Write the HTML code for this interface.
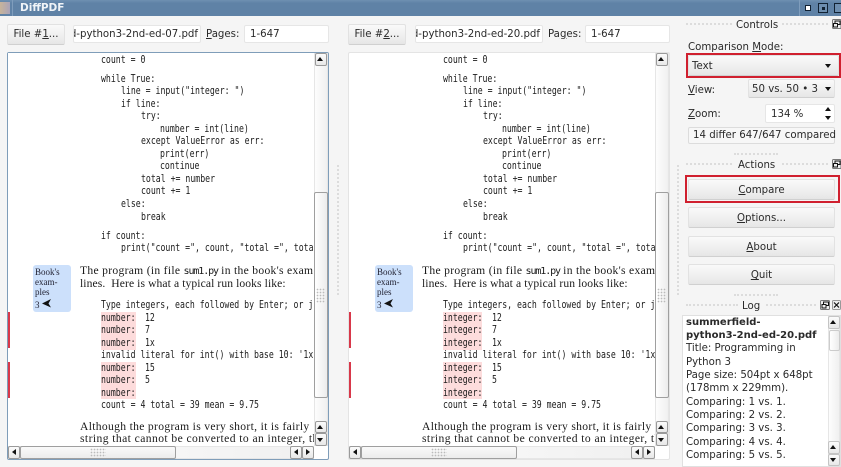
<!DOCTYPE html>
<html><head><meta charset="utf-8"><style>
html,body{margin:0;padding:0}
body{width:841px;height:467px;overflow:hidden;position:relative;background:#f5f5f5;font-family:"DejaVu Sans","Liberation Sans",sans-serif;font-size:10.2px;color:#2a2a2a}
div,span.a{position:absolute;box-sizing:border-box}
svg{position:absolute}
.t{white-space:pre;line-height:18px}
.lg{line-height:16px}
.b{background:linear-gradient(#fafafa,#e6e6e6);border:1px solid #e2e2e2;border-bottom-color:#d0d0d0;border-radius:2px;text-align:center;line-height:21px;white-space:pre}
.e{background:#fff;border:1px solid #e6e6e6;border-radius:2px;white-space:pre;line-height:17px;overflow:hidden}
.fn{right:2px;top:0}
.pane{left:8px;top:53px;width:306px;height:393px;overflow:hidden;background:#fff}
.m{font:10.2px/12px "DejaVu Sans Mono",monospace;color:#1c1c1c;white-space:pre;transform:scaleX(.805);transform-origin:0 0;margin-top:1px}
.s{font:11.6px/13px "Liberation Serif",serif;color:#1a1a1a;white-space:pre;letter-spacing:.42px}
.p{background:#fddcdc}
.bk{left:25px;top:212px;width:38px;height:47px;background:#cce0fb;border-radius:3px}
.bk div{font:9px/10px "Liberation Serif",serif;color:#223;left:2px;white-space:pre}
.sb{background:linear-gradient(90deg,#fdfdfd,#f0f0f0);border:1px solid #e6e6e6}
.btn{background:linear-gradient(#fbfbfb,#e8e8e8);border:1px solid #9a9a9a;border-radius:2px}
.h{background:linear-gradient(90deg,#fff,#ececec);border:1px solid #9f9f9f;border-radius:2px}
.u,.d,.l,.r{width:0;height:0;border-style:solid;border-color:transparent}
.u{border-width:0 3.5px 4px;border-bottom-color:#111}
.d{border-width:4px 3.5px 0;border-top-color:#111}
.l{border-width:3.5px 4px 3.5px 0;border-right-color:#111}
.r{border-width:3.5px 0 3.5px 4px;border-left-color:#111}
.dot{border-top:2px dotted #dcdcdc;height:0}
.vd{border-left:2px dotted #dcdcdc;width:0}
.grip{background-image:radial-gradient(#bbb 35%,transparent 40%);background-size:3px 3px}
u{text-decoration:underline}
</style></head><body>

<!-- title bar -->
<div style="left:0;top:0;width:841px;height:16px;background:linear-gradient(#6f90b1,#5f82a6 20%,#5f82a6)"></div>
<div style="left:0;top:2px;width:10px;height:12px;background:linear-gradient(90deg,#c8b49a,#a9a3b8)"></div>
<div style="left:12px;top:0;width:1px;height:16px;background:#7f9dbc"></div>
<div class="t" style="left:20px;top:-1px;color:#f0f4f8;font-weight:bold;font-size:10.5px">DiffPDF</div>
<div style="left:799px;top:0;width:1px;height:16px;background:#7f9dbc"></div>
<div style="left:805px;top:5px;width:6px;height:6px;background:#fff;border:1px solid #123"></div>
<div style="left:818px;top:3px;width:10px;height:10px;background:#6d8eaf;border:1px solid #123"></div>
<div style="left:822px;top:7px;width:3px;height:3px;background:#123"></div>
<div style="left:834px;top:3px;width:10px;height:10px;background:#6d8eaf;border:1px solid #123"></div>

<!-- left toolbar -->
<div class="b" style="left:7px;top:24px;width:58px;height:21px;line-height:19px">File #<u>1</u>...</div>
<div class="e" style="left:73px;top:25px;width:128px;height:18px"><div class="fn">rd-python3-2nd-ed-07.pdf</div></div>
<div class="t" style="left:206px;top:26px"><u>P</u>ages:</div>
<div class="e" style="left:244px;top:25px;width:85px;height:18px;padding-left:5px">1-647</div>

<!-- right toolbar -->
<div class="b" style="left:348px;top:24px;width:58px;height:21px;line-height:19px">File #<u>2</u>...</div>
<div class="e" style="left:415px;top:25px;width:128px;height:18px"><div class="fn">rd-python3-2nd-ed-20.pdf</div></div>
<div class="t" style="left:548px;top:26px">Pa<u>g</u>es:</div>
<div class="e" style="left:585px;top:25px;width:85px;height:18px;padding-left:5px">1-647</div>

<!-- frames -->
<div style="left:7px;top:52px;width:322px;height:408px;border:1px solid #7f9db9;border-radius:2px;background:#fff"></div>
<div style="left:348px;top:52px;width:322px;height:408px;border:1px solid #e4e4e4;border-radius:2px;background:#fff"></div>

<!-- left pane -->
<div class="pane">
<div class="m" style="left:93px;top:1px">count = 0</div>
<div class="m" style="left:93px;top:20px">while True:</div>
<div class="m" style="left:113px;top:32px">line = input("integer: ")</div>
<div class="m" style="left:113px;top:45px">if line:</div>
<div class="m" style="left:133px;top:57px">try:</div>
<div class="m" style="left:152px;top:70px">number = int(line)</div>
<div class="m" style="left:133px;top:82px">except ValueError as err:</div>
<div class="m" style="left:152px;top:95px">print(err)</div>
<div class="m" style="left:152px;top:107px">continue</div>
<div class="m" style="left:133px;top:120px">total += number</div>
<div class="m" style="left:133px;top:132px">count += 1</div>
<div class="m" style="left:113px;top:145px">else:</div>
<div class="m" style="left:133px;top:158px">break</div>
<div class="m" style="left:93px;top:177px">if count:</div>
<div class="m" style="left:113px;top:189px">print("count =", count, "total =", total</div>
<div class="bk"><div style="top:2px">Book's</div><div style="top:12px">exam-</div><div style="top:22px">ples</div><div style="top:35px">3</div><svg style="left:9px;top:34px" width="10" height="9"><path d="M0 4.5L9 0L6.5 4.5L9 8.5Z" fill="#111"/></svg></div>
<div class="s" style="left:72px;top:211px;letter-spacing:.3px">The program (in file <span style="font:10px 'DejaVu Sans Mono',monospace;letter-spacing:-1.1px">sum1.py</span> in the book's exam</div>
<div class="s" style="left:72px;top:224px;letter-spacing:.09px">lines.  Here is what a typical run looks like:</div>
<div class="p" style="left:93px;top:259px;width:35px;height:87px"></div>
<div class="m" style="left:93px;top:246px">Type integers, each followed by Enter; or just</div>
<div class="m" style="left:93px;top:259px">number: </div><div class="m" style="left:137px;top:259px">12</div>
<div class="m" style="left:93px;top:271px">number: </div><div class="m" style="left:137px;top:271px">7</div>
<div class="m" style="left:93px;top:284px">number: </div><div class="m" style="left:137px;top:284px">1x</div>
<div class="m" style="left:93px;top:296px;background:#fff;padding-right:200px">invalid literal for int() with base 10: '1x'</div>
<div class="m" style="left:93px;top:309px">number: </div><div class="m" style="left:137px;top:309px">15</div>
<div class="m" style="left:93px;top:321px">number: </div><div class="m" style="left:137px;top:321px">5</div>
<div class="m" style="left:93px;top:334px">number: </div>
<div class="m" style="left:93px;top:346px">count = 4 total = 39 mean = 9.75</div>
<div class="s" style="left:72px;top:367px;letter-spacing:.32px">Although the program is very short, it is fairly</div>
<div class="s" style="left:72px;top:379px">string that cannot be converted to an integer, the</div>
</div>
<div style="left:8px;top:312px;width:2px;height:36px;background:#d8384a"></div>
<div style="left:8px;top:362px;width:2px;height:36px;background:#d8384a"></div>

<!-- right pane -->
<div class="pane" style="left:350px">
<div class="m" style="left:93px;top:1px">count = 0</div>
<div class="m" style="left:93px;top:20px">while True:</div>
<div class="m" style="left:113px;top:32px">line = input("integer: ")</div>
<div class="m" style="left:113px;top:45px">if line:</div>
<div class="m" style="left:133px;top:57px">try:</div>
<div class="m" style="left:152px;top:70px">number = int(line)</div>
<div class="m" style="left:133px;top:82px">except ValueError as err:</div>
<div class="m" style="left:152px;top:95px">print(err)</div>
<div class="m" style="left:152px;top:107px">continue</div>
<div class="m" style="left:133px;top:120px">total += number</div>
<div class="m" style="left:133px;top:132px">count += 1</div>
<div class="m" style="left:113px;top:145px">else:</div>
<div class="m" style="left:133px;top:158px">break</div>
<div class="m" style="left:93px;top:177px">if count:</div>
<div class="m" style="left:113px;top:189px">print("count =", count, "total =", total</div>
<div class="bk"><div style="top:2px">Book's</div><div style="top:12px">exam-</div><div style="top:22px">ples</div><div style="top:35px">3</div><svg style="left:9px;top:34px" width="10" height="9"><path d="M0 4.5L9 0L6.5 4.5L9 8.5Z" fill="#111"/></svg></div>
<div class="s" style="left:72px;top:211px;letter-spacing:.3px">The program (in file <span style="font:10px 'DejaVu Sans Mono',monospace;letter-spacing:-1.1px">sum1.py</span> in the book's exam</div>
<div class="s" style="left:72px;top:224px;letter-spacing:.09px">lines.  Here is what a typical run looks like:</div>
<div class="p" style="left:93px;top:259px;width:39px;height:87px"></div>
<div class="m" style="left:93px;top:246px">Type integers, each followed by Enter; or just</div>
<div class="m" style="left:93px;top:259px">integer: </div><div class="m" style="left:142px;top:259px">12</div>
<div class="m" style="left:93px;top:271px">integer: </div><div class="m" style="left:142px;top:271px">7</div>
<div class="m" style="left:93px;top:284px">integer: </div><div class="m" style="left:142px;top:284px">1x</div>
<div class="m" style="left:93px;top:296px;background:#fff;padding-right:200px">invalid literal for int() with base 10: '1x'</div>
<div class="m" style="left:93px;top:309px">integer: </div><div class="m" style="left:142px;top:309px">15</div>
<div class="m" style="left:93px;top:321px">integer: </div><div class="m" style="left:142px;top:321px">5</div>
<div class="m" style="left:93px;top:334px">integer: </div>
<div class="m" style="left:93px;top:346px">count = 4 total = 39 mean = 9.75</div>
<div class="s" style="left:72px;top:367px;letter-spacing:.32px">Although the program is very short, it is fairly</div>
<div class="s" style="left:72px;top:379px">string that cannot be converted to an integer, the</div>
</div>
<div style="left:349px;top:312px;width:2px;height:36px;background:#d8384a"></div>
<div style="left:349px;top:362px;width:2px;height:36px;background:#d8384a"></div>

<!-- left scrollbars -->
<div class="sb" style="left:314px;top:53px;width:14px;height:393px"></div>
<div class="btn" style="left:315px;top:53px;width:12px;height:13px"></div><div class="u" style="left:317px;top:57px"></div>
<div class="h" style="left:314px;top:192px;width:14px;height:206px"></div>
<div class="grip" style="left:316px;top:288px;width:9px;height:15px"></div>
<div class="btn" style="left:315px;top:421px;width:12px;height:12px"></div><div class="u" style="left:317px;top:425px"></div>
<div class="btn" style="left:315px;top:433px;width:12px;height:13px"></div><div class="d" style="left:317px;top:438px"></div>
<div class="sb" style="left:8px;top:446px;width:306px;height:13px"></div>
<div class="btn" style="left:8px;top:446px;width:12px;height:13px"></div><div class="l" style="left:12px;top:449px"></div>
<div style="left:20px;top:446px;width:156px;height:13px;background:linear-gradient(#fafafa,#ececec);border:1px solid #9f9f9f;border-radius:2px"></div>
<div class="grip" style="left:90px;top:448px;width:16px;height:9px"></div>
<div class="btn" style="left:290px;top:446px;width:12px;height:13px"></div><div class="l" style="left:294px;top:449px"></div>
<div class="btn" style="left:302px;top:446px;width:12px;height:13px"></div><div class="r" style="left:306px;top:449px"></div>

<!-- right scrollbars -->
<div class="sb" style="left:655px;top:53px;width:14px;height:393px"></div>
<div class="btn" style="left:656px;top:53px;width:12px;height:13px"></div><div class="u" style="left:658px;top:57px"></div>
<div class="h" style="left:655px;top:192px;width:14px;height:206px"></div>
<div class="grip" style="left:657px;top:288px;width:9px;height:15px"></div>
<div class="btn" style="left:656px;top:421px;width:12px;height:12px"></div><div class="u" style="left:658px;top:425px"></div>
<div class="btn" style="left:656px;top:433px;width:12px;height:13px"></div><div class="d" style="left:658px;top:438px"></div>
<div class="sb" style="left:349px;top:446px;width:306px;height:13px"></div>
<div class="btn" style="left:349px;top:446px;width:12px;height:13px"></div><div class="l" style="left:353px;top:449px"></div>
<div style="left:361px;top:446px;width:156px;height:13px;background:linear-gradient(#fafafa,#ececec);border:1px solid #9f9f9f;border-radius:2px"></div>
<div class="grip" style="left:431px;top:448px;width:16px;height:9px"></div>
<div class="btn" style="left:631px;top:446px;width:12px;height:13px"></div><div class="l" style="left:635px;top:449px"></div>
<div class="btn" style="left:643px;top:446px;width:12px;height:13px"></div><div class="r" style="left:647px;top:449px"></div>

<!-- splitter dots -->
<div class="vd" style="left:337px;top:165px;height:130px"></div>
<div class="vd" style="left:677px;top:165px;height:130px"></div>

<!-- controls dock -->
<div class="dot" style="left:686px;top:23px;width:46px"></div>
<div class="dot" style="left:782px;top:23px;width:46px"></div>
<div class="t" style="left:736px;top:17px">Controls</div>
<svg style="left:832px;top:19px" width="9" height="10"><rect x=".5" y=".5" width="8.5" height="9" rx="1" fill="#eee" stroke="#777"/><rect x="3" y="2" width="5" height="3.5" fill="none" stroke="#111"/><rect x="1.5" y="4.5" width="4" height="3.5" fill="#eee" stroke="#111"/></svg>
<div class="t" style="left:688px;top:39px">Comparison <u>M</u>ode:</div>
<div style="left:686px;top:53px;width:155px;height:25px;border:2px solid #d0202f"></div>
<div class="b" style="left:688px;top:55px;width:151px;height:21px;text-align:left;padding-left:3px">Text</div>
<div class="d" style="left:825px;top:64px"></div>
<div class="t" style="left:688px;top:82px"><u>V</u>iew:</div>
<div class="b" style="left:748px;top:79px;width:87px;height:19px;text-align:left;padding-left:3px;line-height:19px">50 vs. 50 • 3</div>
<div class="d" style="left:825px;top:87px"></div>
<div class="t" style="left:688px;top:106px"><u>Z</u>oom:</div>
<div class="e" style="left:765px;top:104px;width:70px;height:19px;padding-left:5px;line-height:19px">134 %</div>
<div class="u" style="left:825px;top:107px"></div>
<div class="d" style="left:825px;top:116px"></div>
<div class="t" style="left:688px;top:127px;width:147px;height:17px;border:1px solid #dcdcdc;border-radius:2px;padding-left:4px;background:#f7f7f7;line-height:16px">14 differ 647/647 compared</div>
<div class="dot" style="left:734px;top:153px;width:44px"></div>

<!-- actions dock -->
<div class="dot" style="left:686px;top:163px;width:46px"></div>
<div class="dot" style="left:782px;top:163px;width:46px"></div>
<div class="t" style="left:738px;top:157px">Actions</div>
<svg style="left:832px;top:159px" width="9" height="10"><rect x=".5" y=".5" width="8.5" height="9" rx="1" fill="#eee" stroke="#777"/><rect x="3" y="2" width="5" height="3.5" fill="none" stroke="#111"/><rect x="1.5" y="4.5" width="4" height="3.5" fill="#eee" stroke="#111"/></svg>
<div style="left:685px;top:175px;width:155px;height:28px;border:2px solid #d0202f"></div>
<div class="b" style="left:688px;top:179px;width:147px;height:21px"><u>C</u>ompare</div>
<div class="b" style="left:688px;top:207px;width:147px;height:21px"><u>O</u>ptions...</div>
<div class="b" style="left:688px;top:236px;width:147px;height:21px"><u>A</u>bout</div>
<div class="b" style="left:688px;top:264px;width:147px;height:21px"><u>Q</u>uit</div>
<div class="dot" style="left:734px;top:294px;width:44px"></div>

<!-- log dock -->
<div class="dot" style="left:686px;top:304px;width:52px"></div>
<div class="dot" style="left:766px;top:304px;width:50px"></div>
<div class="t" style="left:742px;top:298px">Log</div>
<svg style="left:820px;top:300px" width="10" height="10"><rect x=".5" y=".5" width="9" height="9" rx="1" fill="#eee" stroke="#777"/><rect x="3.5" y="2" width="5" height="3.5" fill="none" stroke="#111"/><rect x="2" y="4.5" width="4" height="3.5" fill="#eee" stroke="#111"/></svg>
<svg style="left:832px;top:300px" width="9" height="10"><rect x=".5" y=".5" width="8" height="9" rx="1" fill="#eee" stroke="#999"/><path d="M2 2.5L7 7.5M7 2.5L2 7.5" stroke="#111" stroke-width="1.2"/></svg>
<div style="left:682px;top:315px;width:159px;height:152px;background:#fff;border:1px solid #e0e0e0"></div>
<div class="t lg" style="left:686px;top:315px;font-weight:bold;font-size:10px">summerfield-</div>
<div class="t lg" style="left:686px;top:328px;font-weight:bold;font-size:10px">python3-2nd-ed-20.pdf</div>
<div class="t lg" style="left:686px;top:341px">Title: Programming in</div>
<div class="t lg" style="left:686px;top:355px">Python 3</div>
<div class="t lg" style="left:686px;top:368px">Page size: 504pt x 648pt</div>
<div class="t lg" style="left:686px;top:381px">(178mm x 229mm).</div>
<div class="t lg" style="left:686px;top:395px">Comparing: 1 vs. 1.</div>
<div class="t lg" style="left:686px;top:408px">Comparing: 2 vs. 2.</div>
<div class="t lg" style="left:686px;top:421px">Comparing: 3 vs. 3.</div>
<div class="t lg" style="left:686px;top:435px">Comparing: 4 vs. 4.</div>
<div class="t lg" style="left:686px;top:448px">Comparing: 5 vs. 5.</div>
<div class="sb" style="left:828px;top:316px;width:12px;height:150px"></div>
<div class="btn" style="left:828px;top:316px;width:12px;height:13px;border-color:#c4c4c4"></div><div class="u" style="left:830px;top:320px"></div>
<div class="h" style="left:829px;top:330px;width:11px;height:21px;border-color:#ccc"></div>
<div class="btn" style="left:828px;top:441px;width:12px;height:13px;border-color:#c4c4c4"></div><div class="u" style="left:830px;top:445px"></div>
<div class="btn" style="left:828px;top:454px;width:12px;height:12px;border-color:#c4c4c4"></div><div class="d" style="left:830px;top:458px"></div>
</body></html>
